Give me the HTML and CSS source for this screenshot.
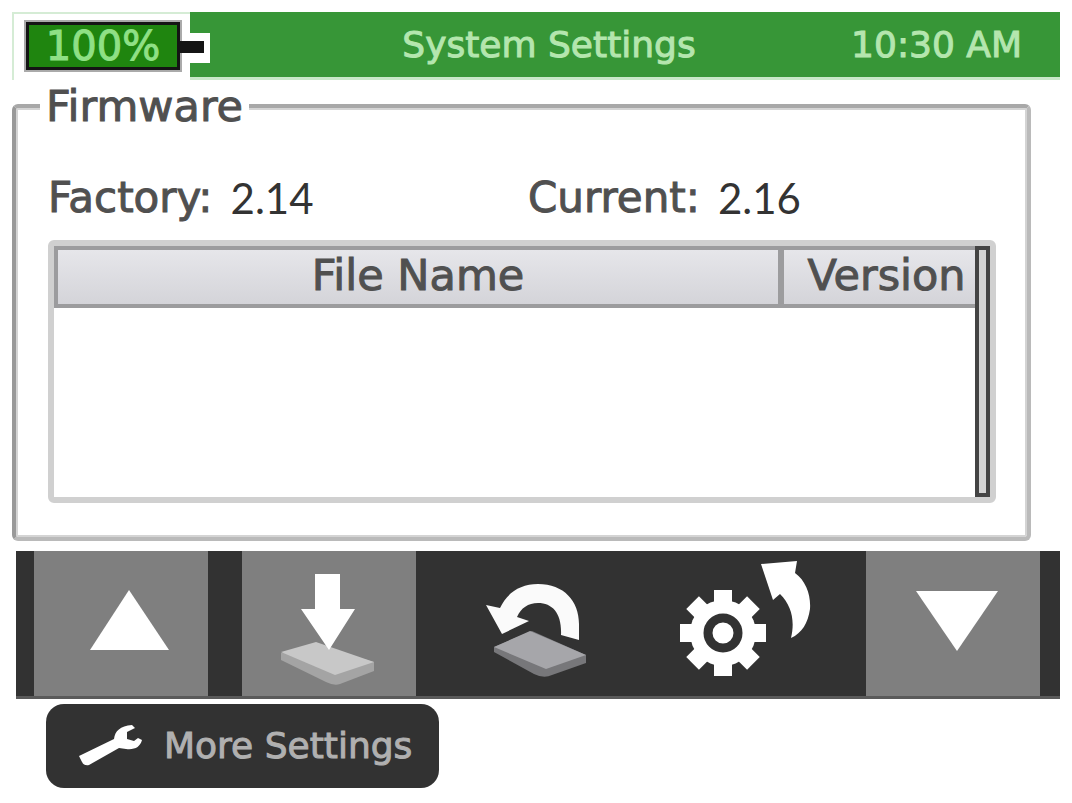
FILE: index.html
```html
<!DOCTYPE html>
<html lang="en">

<head>
    <meta charset="UTF-8">
    <meta name="viewport" content="width=device-width, initial-scale=1.0">
    <title>System Settings</title>
    <link rel="stylesheet" href="styles.css">
</head>

<body>
    <header class="status-bar">
        <div class="battery">
            <span class="battery-level">100%</span>
            <span class="battery-tip"></span>
        </div>
        <h1>System Settings</h1>
        <time datetime="10:30">10:30 AM</time>
    </header>

    <main>
        <fieldset class="firmware">
            <legend>Firmware</legend>
            <dl class="versions">
                <div class="version">
                    <dt>Factory:</dt>
                    <dd>2.14</dd>
                </div>
                <div class="version">
                    <dt>Current:</dt>
                    <dd>2.16</dd>
                </div>
            </dl>

            <div class="file-list">
                <table>
                    <thead>
                        <tr>
                            <th class="col-name" scope="col">File Name</th>
                            <th class="col-version" scope="col">Version</th>
                        </tr>
                    </thead>
                    <tbody></tbody>
                </table>
                <div class="scrollbar"></div>
            </div>
        </fieldset>
    </main>

    <nav class="toolbar">
        <button type="button" class="key" aria-label="Up">
            <svg viewBox="0 0 174 148">
                <path d="M95 39 L135 99 H56 Z" fill="#fff"/>
            </svg>
        </button>
        <button type="button" class="key" aria-label="Install">
            <svg viewBox="0 0 174 148">
                <path d="M39 102 L71 93 L132 111 V120 L98 133 Q92 135 84 131 L39 109 Z" fill="#a4a4a4"/>
                <path d="M39 101 L74 91 L132 111 L93 124 Z" fill="#c8c8c8"/>
                <path d="M73 23 H98 V58 H113 L87 99 L59 58 H73 Z" fill="#fff"/>
            </svg>
        </button>
        <button type="button" class="key dark" aria-label="Restore">
            <svg viewBox="0 0 174 148">
                <path d="M44 96 L82 80 L136 104 V112 L102 124 Q94 128 84 123 L44 101 Z" fill="#77777a"/>
                <path d="M44 96 L80 80 L136 104 L96 118 Z" fill="#a6a6aa"/>
                <path d="M36 54 L50 57 C57 42 70 33 88 33 C114 33 129 50 129 73 V89 L111 84 C112 63 103 52 88 52 C78 52 71 57 67 66 L79 70 L52 83 Z" fill="#fafafa"/>
            </svg>
        </button>
        <button type="button" class="key dark" aria-label="Reset settings">
            <svg viewBox="0 0 174 148">
                <g fill="#fff">
                    <circle cx="65" cy="82" r="33"/>
                    <path d="M56 39 H74 V125 H56 Z"/>
                    <path d="M56 39 H74 V125 H56 Z" transform="rotate(45 65 82)"/>
                    <path d="M56 39 H74 V125 H56 Z" transform="rotate(90 65 82)"/>
                    <path d="M56 39 H74 V125 H56 Z" transform="rotate(135 65 82)"/>
                    <path d="M103 13 L139 10 L137 22 C148 30 153 44 152 58 C150 72 144 82 133 87 C137 70 134 55 122 43 L115 49 Z"/>
                </g>
                <circle cx="65" cy="82" r="15" fill="#fff" stroke="#323232" stroke-width="9"/>
            </svg>
        </button>
        <button type="button" class="key" aria-label="Down">
            <svg viewBox="0 0 174 148">
                <path d="M50 40 H132 L91 100 Z" fill="#fff"/>
            </svg>
        </button>
    </nav>

    <button type="button" class="more-settings">
        <svg viewBox="0 0 66 46">
            <path d="M1 33 L36 16 C37 8 42 3 54 2 L57 5 L49 9 L49 16 L56 18 L60 15 L64 17 C62 24 57 27 48 26 L41 25 L11 42 Q6 43 4 39 Z" fill="#fff"/>
        </svg>
        More Settings
    </button>
</body>

</html>
```
FILE: styles.css
```css
* {
    box-sizing: border-box;
}

body {
    margin: 0;
    padding: 12px;
    background-color: #ffffff;
    color: #505050;
    font-family: "DejaVu Sans", Verdana, sans-serif;
    font-size: 43px;
    line-height: 48px;
}

button {
    border: none;
    padding: 0;
    font: inherit;
    cursor: pointer;
}

/* Heavier strokes for the device labels */
legend,
dt,
th,
.status-bar,
.more-settings {
    -webkit-text-stroke: 1px currentColor;
}

/* Status bar */
.status-bar {
    display: grid;
    grid-template-columns: 1fr auto 1fr;
    align-items: center;
    height: 68px;
    padding-right: 38px;
    background-color: #379637;
    border-bottom: 3px solid #c8e8c8;
    color: #b4e6ae;
    font-size: 36px;
}

.status-bar h1 {
    margin: 0;
    padding-left: 64px;
    font-size: 36px;
    font-weight: normal;
}

.status-bar time {
    text-align: right;
}

/* Battery */
.battery {
    display: flex;
    align-items: center;
    justify-self: start;
    position: relative;
    height: 68px;
    margin-bottom: -3px;
    padding: 6px 8px 8px 10px;
    background-color: #ffffff;
    border-top: 2px solid #d5ecd5;
    border-left: 2px solid #d5ecd5;
}

.battery-level {
    width: 158px;
    height: 52px;
    border: 5px solid #141414;
    outline: 2px solid #aaaaaa;
    outline-offset: -2px;
    background-color: #1f850f;
    color: #8fe085;
    font-size: 40px;
    line-height: 42px;
    text-align: center;
}

.battery-tip {
    position: absolute;
    left: 100%;
    top: 19px;
    width: 20px;
    height: 30px;
    background-color: #ffffff;
}

.battery-tip::before {
    content: "";
    position: absolute;
    right: 6px;
    top: 8px;
    width: 26px;
    height: 12px;
    background-color: #141414;
}

/* Firmware panel */
.firmware {
    margin: 2px 29px 10px 0;
    padding: 44px 31px 34px 32px;
    border: 4px solid;
    border-color: #a8a8a8 #bababa #bababa #999999;
    border-radius: 6px;
    box-shadow: inset 0 0 0 2px #d4d4d4;
}

.firmware legend {
    margin-left: -8px;
    padding: 0 6px;
    background-color: #ffffff;
}

.versions {
    display: grid;
    grid-template-columns: 1fr 1fr;
    column-gap: 12px;
    margin: 0 0 18px;
    font-size: 42px;
}

.version {
    display: flex;
    gap: 18px;
}

.version dd {
    margin: 0;
    color: #333333;
    font-family: Lato, Calibri, sans-serif;
}

/* File list */
.file-list {
    display: flex;
    align-items: stretch;
    height: 263px;
    border: 6px solid #d0d0d0;
    border-radius: 6px;
}

.file-list table {
    flex: 1;
    align-self: flex-start;
    border-collapse: collapse;
    table-layout: fixed;
}

.file-list th {
    height: 58px;
    padding: 0 0 4px;
    border: 4px solid #9c9c9e;
    border-right-width: 6px;
    background: linear-gradient(#e6e6ea, #d4d4d9);
    font-weight: normal;
}

.file-list .col-version {
    width: 194px;
    padding-left: 14px;
    border-right: none;
}

.scrollbar {
    width: 15px;
    border: 4px solid #444444;
    background-color: #d4d4d4;
}

/* Toolbar */
.toolbar {
    display: flex;
    gap: 34px;
    margin-left: 4px;
    padding: 0 20px 0 18px;
    background-color: #323232;
    border-bottom: 3px solid #5a5a5a;
}

.key {
    flex: 1;
    height: 145px;
    background-color: #7f7f7f;
}

.key.dark {
    background-color: #323232;
}

.key svg {
    display: block;
    width: 100%;
    height: 148px;
}

/* More settings */
.more-settings {
    display: flex;
    align-items: center;
    gap: 20px;
    height: 84px;
    margin: 5px 0 0 34px;
    padding: 0 27px 0 32px;
    border-radius: 18px;
    background-color: #323232;
    color: #b0b0b0;
    font-size: 36px;
}

.more-settings svg {
    width: 66px;
    height: 46px;
}
```
